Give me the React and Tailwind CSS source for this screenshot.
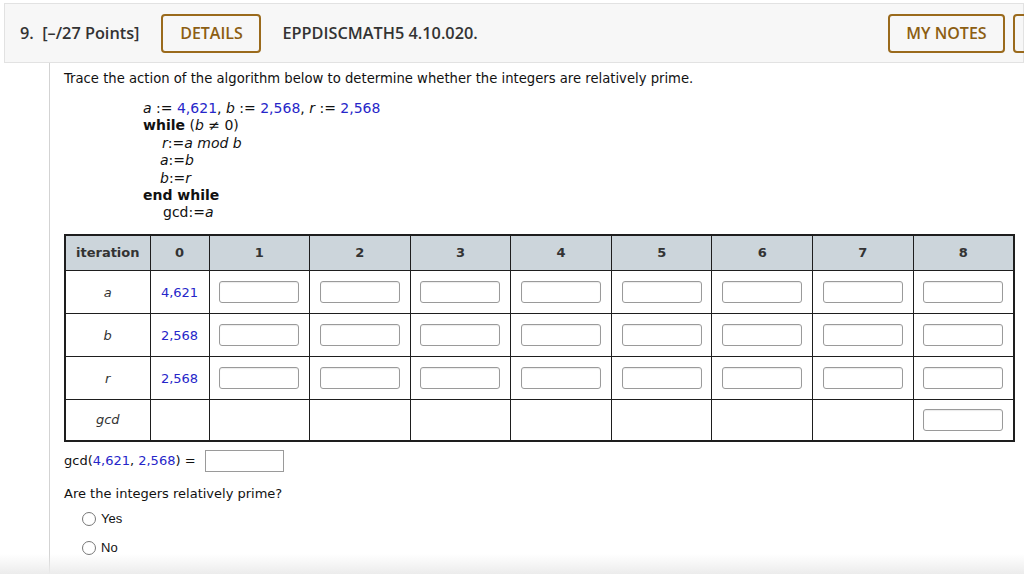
import React from "react";

const blue = "text-[#2626c9]";

function Inp({ w = "w-[80px]" }) {
  return (
    <div className={`${w} h-[22px] mx-auto border border-[#9a9a9a] rounded-[3px] bg-white shadow-[inset_0_1px_1px_rgba(0,0,0,0.08)]`} />
  );
}

function Radio({ label }) {
  return (
    <div className="flex items-center h-[20px] ml-[18px]">
      <span className="w-[14px] h-[14px] rounded-full border border-[#777] bg-white" />
      <span className="ml-[5px] text-[13px] text-[#111]" style={{ fontFamily: "'Liberation Sans', Arial, sans-serif" }}>{label}</span>
    </div>
  );
}

export default function App() {
  const cols = [1, 2, 3, 4, 5, 6, 7, 8];
  const rows = [
    { name: "a", v: "4,621" },
    { name: "b", v: "2,568" },
    { name: "r", v: "2,568" },
  ];
  const verd = { fontFamily: "'DejaVu Sans', Verdana, sans-serif" };
  return (
    <div className="w-[1024px] h-[574px] overflow-hidden bg-white relative" style={verd}>
      {/* header */}
      <div
        className="ml-[4px] mt-[3px] h-[60px] border border-[#e2e2e2] bg-[#f7f7f7] flex items-center whitespace-nowrap"
        style={{ fontFamily: "'Open Sans', sans-serif" }}
      >
        <span className="ml-[15px] text-[16.3px] font-semibold text-[#333]">9.&nbsp; [–/27 Points]</span>
        <div className="ml-[22px] w-[100px] h-[39px] border-2 border-[#9a6a1c] rounded-[4px] flex items-center justify-center text-[16px] font-semibold text-[#8c5e12]">
          DETAILS
        </div>
        <span className="ml-[21px] text-[16.3px] font-semibold text-[#333]">EPPDISCMATH5 4.10.020.</span>
        <div className="ml-auto w-[117px] h-[39px] border-2 border-[#9a6a1c] rounded-[4px] flex items-center justify-center text-[16px] font-semibold text-[#8c5e12]">
          MY NOTES
        </div>
        <div className="ml-[8px] mr-[-20px] w-[30px] h-[39px] border-2 border-[#9a6a1c] rounded-[4px]" />
      </div>

      {/* body */}
      <div className="ml-[49px] border-l border-[#d3d3d3] pl-[14px] h-[520px] text-[13px] text-[#111]">
        <div className="pt-[8px] leading-[16px] text-[13.2px]">
          Trace the action of the algorithm below to determine whether the integers are relatively prime.
        </div>
        <div className="mt-[13px] ml-[79px] leading-[17.4px] text-[14px]">
          <div>
            <i>a</i> := <span className={blue}>4,621</span>, <i>b</i> := <span className={blue}>2,568</span>, <i>r</i> := <span className={blue}>2,568</span>
          </div>
          <div>
            <b>while</b> (<i>b</i> ≠ 0)
          </div>
          <div className="pl-[19px]"><i>r</i>:=<i>a</i> <i>mod</i> <i>b</i></div>
          <div className="pl-[17px]"><i>a</i>:=<i>b</i></div>
          <div className="pl-[17px]"><i>b</i>:=<i>r</i></div>
          <div><b>end while</b></div>
          <div className="pl-[20px]">gcd:=<i>a</i></div>
        </div>

        <table className="mt-[12px] border-collapse border-2 border-[#1e1e1e] table-fixed w-[949px]">
          <colgroup>
            <col className="w-[85px]" />
            <col className="w-[59px]" />
            {cols.map((c) => (
              <col key={c} className="w-[100.6px]" />
            ))}
          </colgroup>
          <thead>
            <tr className="h-[36px] bg-[#ccd5db]">
              <th className="border border-[#1e1e1e] text-[13px] font-bold text-[#333]">iteration</th>
              <th className="border border-[#1e1e1e] text-[13px] font-bold text-[#333]">0</th>
              {cols.map((c) => (
                <th key={c} className="border border-[#1e1e1e] text-[13px] font-bold text-[#333]">{c}</th>
              ))}
            </tr>
          </thead>
          <tbody>
            {rows.map((r) => (
              <tr key={r.name} className="h-[43px]">
                <td className="border border-[#1e1e1e] text-center italic text-[#333]">{r.name}</td>
                <td className={`border border-[#1e1e1e] text-center ${blue}`}>{r.v}</td>
                {cols.map((c) => (
                  <td key={c} className="border border-[#1e1e1e]"><Inp /></td>
                ))}
              </tr>
            ))}
            <tr className="h-[41px]">
              <td className="border border-[#1e1e1e] text-center italic text-[#333]">gcd</td>
              <td className="border border-[#1e1e1e]" />
              {cols.map((c) => (
                <td key={c} className="border border-[#1e1e1e]">{c === 8 ? <Inp /> : null}</td>
              ))}
            </tr>
          </tbody>
        </table>

        <div className="mt-[8px] flex items-center h-[22px]">
          <span>gcd(<span className={blue}>4,621</span>, <span className={blue}>2,568</span>) =</span>
          <div className="ml-[9px] w-[79px] h-[22px] border border-[#9a9a9a] bg-white" />
        </div>
        <div className="mt-[14px] leading-[16px]">Are the integers relatively prime?</div>
        <div className="mt-[7px]"><Radio label="Yes" /></div>
        <div className="mt-[9px]"><Radio label="No" /></div>
      </div>
      <div className="absolute left-0 right-0 bottom-0 h-[20px] bg-gradient-to-b from-[rgba(240,240,240,0)] to-[#ececec]" />
    </div>
  );
}
